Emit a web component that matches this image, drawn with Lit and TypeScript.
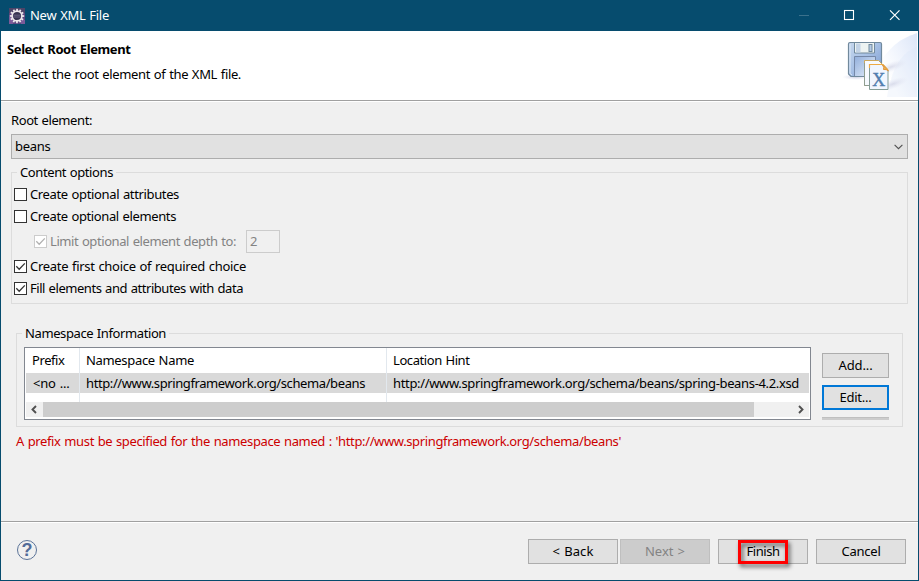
import { LitElement, html, css, svg, nothing } from "lit";
import { customElement, property } from "lit/decorators.js";
import { classMap } from "lit/directives/class-map.js";

/** A single-line label whose tracking is adjusted so it spans a given width. */
@customElement("fit-text")
export class FitText extends LitElement {
  @property() text = "";
  @property({ type: Number }) span = 0;

  static styles = css`
    :host { display: inline-block; white-space: pre; flex: none; }
    span { display: inline-block; white-space: pre; word-spacing: 0.7px; }
  `;

  protected updated() {
    const el = this.renderRoot.querySelector("span")!;
    el.style.letterSpacing = "0px";
    const natural = el.getBoundingClientRect().width;
    if (this.span > 0) {
      el.style.letterSpacing = (this.span - natural) / this.text.length + "px";
    }
  }

  render() {
    return html`<span>${this.text}</span>`;
  }
}

@customElement("check-row")
export class CheckRow extends LitElement {
  @property() label = "";
  @property({ type: Number }) span = 0;
  @property({ type: Boolean }) checked = false;
  @property({ type: Boolean }) disabled = false;

  static styles = css`
    :host { display: flex; align-items: center; gap: 3px; height: 22px; }
    .box { width: 11px; height: 11px; border: 1px solid #333; background: #fff; flex: none; }
    .box svg { display: block; }
    .box path { fill: none; stroke: #333; stroke-width: 1.3; }
    .off { color: #838383; }
    .box.off { border-color: #ccc; }
    .box.off path { stroke: #b0b0b0; }
  `;

  render() {
    const off = { off: this.disabled };
    return html`
      <div class=${classMap({ box: true, ...off })}>
        ${this.checked
          ? html`<svg width="11" height="11" viewBox="0 0 11 11"><path d="M1.3 5.3 4.2 8.2 9.8 2.4" /></svg>`
          : nothing}
      </div>
      <fit-text class=${classMap(off)} .text=${this.label} .span=${this.span}></fit-text>
    `;
  }
}

const gearTeeth = Array.from({ length: 12 }, (_, i) =>
  svg`<rect x="7.2" y="0.8" width="1.7" height="3" fill="#eee9ec" transform="rotate(${i * 30} 8 8)" />`);

@customElement("app-root")
export class AppRoot extends LitElement {
  static styles = css`
    * { box-sizing: border-box; }
    :host {
      display: flex; flex-direction: column; width: 919px; height: 581px; overflow: hidden;
      border: 1px solid #064c6e; border-top: 0; background: #f0f0f0; color: #000;
      font: 13px/18px "Noto Sans", "Open Sans", sans-serif; box-sizing: border-box;
    }
    svg { display: block; flex: none; }
    .title { height: 31px; flex: none; background: #064c6e; color: #fff; display: flex; align-items: center; padding-left: 8px; }
    .title fit-text { margin: 0 0 1px 5px; }
    .controls { margin-left: auto; }
    .header { height: 69px; flex: none; background: #fff; display: flex; justify-content: space-between; padding-left: 6px; }
    .heading { padding-top: 9px; display: flex; flex-direction: column; align-items: flex-start; }
    .heading .strong { font-weight: 700; height: 18px; }
    .heading .sub { margin: 7px 0 0 7px; }
    .rule { height: 2px; flex: none; background: #fff; border-top: 1px solid #a0a0a0; }
    .content { height: 419px; flex: none; padding: 9px 10px 0; display: flex; flex-direction: column; }
    .combo { margin-top: 5px; height: 25px; border: 1px solid #adadad; background: #e1e1e1; display: flex; align-items: center; justify-content: space-between; padding: 0 4px 0 3px; flex: none; }
    .combo fit-text { margin-bottom: 1px; }
    .label { height: 18px; flex: none; }
    .group { border: 1px solid #dcdcdc; flex: none; display: flex; flex-direction: column; }
    .legend { align-self: flex-start; height: 18px; margin-top: -10px; background: #f0f0f0; padding: 0 3px; }
    .options { margin-top: 13px; height: 132px; padding-left: 2px; }
    .options .legend { margin-left: 3px; margin-bottom: 2px; }
    .nested { display: flex; align-items: center; height: 28px; padding-left: 20px; gap: 10px; }
    .field { width: 34px; height: 23px; border: 1px solid #ccc; padding-left: 3px; line-height: 21px; color: #838383; }
    .namespaces { margin: 29px 5px 0; height: 94px; padding-left: 7px; }
    .namespaces .legend { margin-left: -2px; }
    .pane { display: flex; gap: 11px; margin-top: 5px; }
    .table { width: 787px; height: 73px; border: 1px solid #828790; background: #fff; padding: 0 1px; display: flex; flex-direction: column; }
    .row { display: grid; grid-template-columns: 54px 307px 1fr; flex: none; height: 20px; }
    .row > div { border-right: 1px solid #e2e8ee; padding-left: 6px; display: flex; align-items: center; overflow: hidden; }
    .row > div:last-child { border-right: 0; }
    .row.head { height: 25px; }
    .row.head > div { padding-bottom: 2px; }
    .row.selected { background: #d9d9d9; }
    .row.selected > div:first-child { padding-left: 7px; }
    .row.blank { height: 9px; }
    .scroll { height: 15px; background: #f0f0f0; display: flex; }
    .thumb { width: 711px; background: #cdcdcd; }
    .actions { display: flex; flex-direction: column; gap: 7px; padding-top: 6px; width: 67px; }
    .button { height: 25px; border: 1px solid #adadad; background: #e1e1e1; display: flex; align-items: center; justify-content: center; flex: none; padding-bottom: 1px; }
    .button.focus { border: 2px solid #0078d7; }
    .clipped { height: 3px; background: #ccc; border-top: 1px solid #bfbfbf; }
    .error { margin: 5px 0 0 5px; color: #cc0000; height: 18px; }
    .footer { flex: 1; display: flex; align-items: flex-start; padding: 16px 12px 0 16px; }
    .buttons { margin-left: auto; display: flex; }
    .buttons .button { width: 90px; }
    .back { margin-right: 2px; }
    .finish { margin: 0 8px; position: relative; }
    .button.disabled { background: #ccc; border-color: #bfbfbf; color: #838383; }
    .mark { position: absolute; left: 19px; top: 0; width: 50px; height: 24px; border: 3px solid #f00; filter: drop-shadow(2px 3px 2px #0009); }
    .help { margin-top: 1px; font: 700 18px/19px "Liberation Sans", sans-serif; width: 20px; height: 20px; border: 1px solid #5b7398; border-radius: 50%; color: #526b98; text-align: center; }
  `;

  private t(text: string, span: number, cls = "") {
    return html`<fit-text class=${cls} .text=${text} .span=${span}></fit-text>`;
  }

  private gearIcon() {
    return html`<svg width="16" height="16" viewBox="0 0 16 16">
      <rect width="16" height="16" fill="#5d477f" />
      <path d="M0 0h16v5H0z" fill="#4d4468" />
      <path d="M0 9h4v7H0zM12 12h4v4h-4z" fill="#7b5b99" />
      ${gearTeeth}
      <circle cx="8" cy="8" r="4.9" fill="#383550" stroke="#eee9ec" stroke-width="1.6" />
      <path d="M4.3 7.2h7.4M4.3 9h7.4" stroke="#7d7799" stroke-width=".7" />
    </svg>`;
  }

  private windowControls() {
    return html`<svg class="controls" width="124" height="31" viewBox="0 0 124 31" fill="none" stroke="#fff">
      <path d="M5 15.5h10" stroke="#3b718c" />
      <rect x="50.5" y="10.5" width="9" height="9" stroke-width="1.1" />
      <path d="M96 10.300l9.500 9.500M105.500 10.300l-9.500 9.500" stroke-width="1.2" />
    </svg>`;
  }

  private banner() {
    return html`<svg width="75" height="69" viewBox="0 0 75 69">
      <defs>
        <linearGradient id="sky" x1="0" y1=".8" x2="1" y2="0">
          <stop offset=".25" stop-color="#fff" /><stop offset=".65" stop-color="#edf2fc" /><stop offset="1" stop-color="#dce6f8" />
        </linearGradient>
        <linearGradient id="disk" x1="0" y1="0" x2="1" y2="1">
          <stop stop-color="#c6d7ed" /><stop offset=".45" stop-color="#a8c1e5" /><stop offset="1" stop-color="#7899cf" />
        </linearGradient>
        <linearGradient id="plate" x1="0" y1="0" x2="1" y2="1">
          <stop stop-color="#92afdc" /><stop offset="1" stop-color="#e6effa" />
        </linearGradient>
        <radialGradient id="shade"><stop stop-color="#c3c6dc" stop-opacity=".8" /><stop offset="1" stop-color="#dcdff0" stop-opacity="0" /></radialGradient>
      </defs>
      <path d="M74 2C57 8 49 14 37 31L32 66h42z" fill="url(#sky)" />
      <path d="M74 16C59 21 49 36 44 66h30z" fill="#d8e4f8" opacity=".25" />
      <g transform="translate(1 0)">
      <ellipse cx="47" cy="36" rx="17" ry="5" transform="rotate(-20 47 36)" fill="url(#shade)" opacity=".7" />
      <ellipse cx="49" cy="53" rx="16" ry="5" transform="rotate(-20 49 53)" fill="url(#shade)" opacity=".7" />
      <ellipse cx="12" cy="46" rx="14" ry="3" fill="url(#shade)" />
      <path d="M6 11.500h30q1.500 0 1.500 1.500v31q0 1.500-1.500 1.500H7L4.500 43V13q0-1.500 1.500-1.500z" fill="url(#disk)" stroke="#71899c" stroke-width="1.2" />
      <path d="M6 13v29.500l2 1.500" fill="none" stroke="#dce9f7" />
      <path d="M10.500 12v10h20V12" fill="#edf3f2" stroke="#71899c" />
      <path d="M12 12.500h4.500v9H12z" fill="#c3d3e6" />
      <rect x="25" y="13.500" width="3" height="7" fill="#b5cbe7" stroke="#71899c" />
      <path d="M10.500 45V25.500h21V45" fill="url(#plate)" stroke="#7588a8" />
      <path d="M20.500 29.500h14l5 5v20h-19z" fill="#f7faff" stroke="#cba85e" />
      <path d="M20.500 32v22.500h19" fill="none" stroke="#8f9d90" />
      <path d="M25.500 33.500h13.500l5 5.500v19.500h-18.500z" fill="#f1f6ff" stroke="#839c96" />
      <path d="M25.500 37v-3.500h13.500l5 5.500" fill="none" stroke="#edaa45" stroke-width="1.2" />
      <path d="M38.500 34l6 6q-2-2-5-1.500 1-2-1-4.500z" fill="#f4b64e" stroke="#df963d" />
      <text x="34.700" y="55" text-anchor="middle" font-family="Liberation Serif" font-size="18" fill="#527eaf" stroke="#527eaf" stroke-width=".4">X</text>
      </g>
    </svg>`;
  }

  private arrow(left: boolean) {
    return html`<svg width="17" height="15" viewBox="0 0 17 15">
      <path d=${left ? "M10 4 6.500 7.500 10 11" : "M7 4l3.500 3.500L7 11"} fill="none" stroke="#505050" stroke-width="1.9" />
    </svg>`;
  }

  render() {
    return html`
      <div class="title">${this.gearIcon()}${this.t("New XML File", 79)}${this.windowControls()}</div>
      <div class="header">
        <div class="heading">
          ${this.t("Select Root Element", 123.5, "strong")}
          ${this.t("Select the root element of the XML file.", 227, "sub")}
        </div>
        ${this.banner()}
      </div>
      <div class="rule"></div>
      <div class="content">
        <div class="label">${this.t("Root element:", 81)}</div>
        <div class="combo">
          ${this.t("beans", 35.5)}
          <svg width="9" height="6" viewBox="0 0 9 6"><path d="M.6.8l3.900 3.900L8.400.8" fill="none" stroke="#505050" stroke-width="1.1" /></svg>
        </div>
        <div class="group options">
          <div class="legend">${this.t("Content options", 93)}</div>
          <check-row label="Create optional attributes" .span=${149}></check-row>
          <check-row label="Create optional elements" .span=${146}></check-row>
          <div class="nested">
            <check-row label="Limit optional element depth to:" .span=${186} checked disabled></check-row>
            <div class="field">2</div>
          </div>
          <check-row label="Create first choice of required choice" .span=${216} checked></check-row>
          <check-row label="Fill elements and attributes with data" .span=${213} checked></check-row>
        </div>
        <div class="group namespaces">
          <div class="legend">${this.t("Namespace Information", 141)}</div>
          <div class="pane">
            <div class="table">
              <div class="row head">
                <div>${this.t("Prefix", 32.5)}</div>
                <div>${this.t("Namespace Name", 108)}</div>
                <div>${this.t("Location Hint", 76.5)}</div>
              </div>
              <div class="row selected">
                <div>${this.t("<no ...", 36.5)}</div>
                <div>${this.t("http://www.springframework.org/schema/beans", 279)}</div>
                <div>${this.t("http://www.springframework.org/schema/beans/spring-beans-4.2.xsd", 406)}</div>
              </div>
              <div class="row blank"><div></div><div></div><div></div></div>
              <div class="scroll">${this.arrow(true)}<div class="thumb"></div><svg width="38" height="15"></svg>${this.arrow(false)}</div>
            </div>
            <div class="actions">
              <div class="button">${this.t("Add...", 34)}</div>
              <div class="button focus">${this.t("Edit...", 32)}</div>
              <div class="clipped"></div>
            </div>
          </div>
        </div>
        <div class="error">${this.t("A prefix must be specified for the namespace named : 'http://www.springframework.org/schema/beans'", 605)}</div>
      </div>
      <div class="rule"></div>
      <div class="footer">
        <div class="help">?</div>
        <div class="buttons">
          <div class="button back">${this.t("< Back", 41)}</div>
          <div class="button disabled">${this.t("Next >", 40)}</div>
          <div class="button finish"><div class="mark"></div>${this.t("Finish", 33)}</div>
          <div class="button">${this.t("Cancel", 39)}</div>
        </div>
      </div>
    `;
  }
}
